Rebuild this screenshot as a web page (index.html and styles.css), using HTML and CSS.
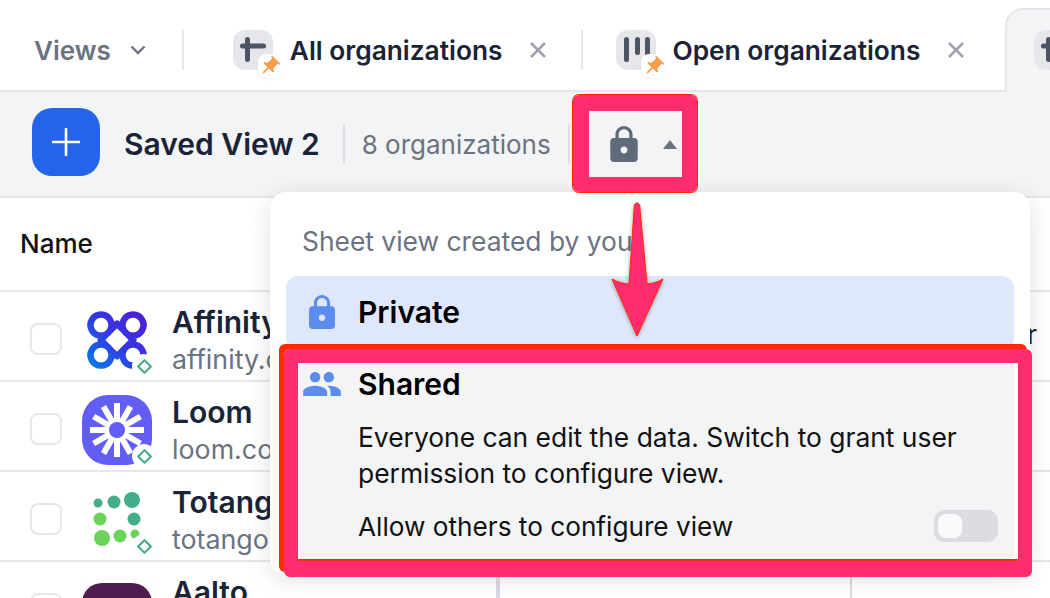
FILE: index.html
```html
<!DOCTYPE html>
<html lang="en">
<head>
    <meta charset="UTF-8">
    <meta name="viewport" content="width=device-width, initial-scale=1.0">
    <title>Saved View 2</title>
    <link rel="stylesheet" href="styles.css">
</head>
<body>
    <svg class="defs" width="0" height="0">
        <symbol id="pin" viewBox="0 0 24 24">
            <path transform="rotate(45 12 12)" d="M16 9V4h1c.55 0 1-.45 1-1s-.45-1-1-1H7c-.55 0-1 .45-1 1s.45 1 1 1h1v5c0 1.66-1.34 3-3 3v2h5.97v7l1 1 1-1v-7H19v-2c-1.66 0-3-1.34-3-3z"/>
        </symbol>
        <symbol id="lock" viewBox="4 1 16 21">
            <path d="M18 8h-1V6c0-2.76-2.24-5-5-5S7 3.24 7 6v2H6c-1.1 0-2 .9-2 2v10c0 1.1.9 2 2 2h12c1.1 0 2-.9 2-2V10c0-1.1-.9-2-2-2zm-6 9c-1.1 0-2-.9-2-2s.9-2 2-2 2 .9 2 2-.9 2-2 2zm3.1-9H8.900V6c0-1.710 1.390-3.100 3.100-3.100 1.710 0 3.100 1.390 3.100 3.100v2z"/>
        </symbol>
    </svg>

    <header class="tabs">
        <span class="views-label">Views</span>
        <svg class="chevron" width="16" height="10" viewBox="0 0 16 10"><path d="M1.500 1.500 8 8l6.500-6.500"/></svg>
        <span class="tabs-divider first"></span>

        <div class="tab tab-first">
            <span class="tab-icon">
                <svg width="40" height="40" viewBox="0 0 40 40"><path d="M14.500 9.500v20M9.500 16h21"/></svg>
                <span class="pin-badge"><svg width="23" height="23"><use href="#pin"/></svg></span>
            </span>
            <span class="tab-name">All organizations</span>
            <svg class="tab-close" width="18" height="18" viewBox="0 0 18 18"><path d="M2 2l14 14M16 2 2 16"/></svg>
        </div>
        <span class="tabs-divider"></span>
        <div class="tab tab-second">
            <span class="tab-icon">
                <svg width="40" height="40" viewBox="0 0 40 40"><path d="M10.500 9.500v20M21.500 9.500v13M31.500 9.500v20"/></svg>
                <span class="pin-badge"><svg width="23" height="23"><use href="#pin"/></svg></span>
            </span>
            <span class="tab-name">Open organizations</span>
            <svg class="tab-close" width="18" height="18" viewBox="0 0 18 18"><path d="M2 2l14 14M16 2 2 16"/></svg>
        </div>
        <div class="tab-active">
            <span class="tab-icon">
                <svg width="40" height="40" viewBox="0 0 40 40"><path d="M14.500 9.500v20M9.500 16h21"/></svg>
            </span>
        </div>
    </header>

    <section class="toolbar">
        <button class="add-button">
            <svg width="28" height="28" viewBox="0 0 28 28"><path d="M14 1v26M1 14h26"/></svg>
        </button>
        <span class="view-title">Saved View 2</span>
        <span class="toolbar-divider"></span>
        <span class="view-count">8 organizations</span>
        <span class="toolbar-divider second"></span>
        <svg class="toolbar-lock" width="28" height="36"><use href="#lock"/></svg>
        <span class="caret"></span>
    </section>

    <main class="sheet">
        <div class="sheet-head">Name</div>

        <div class="row">
            <div class="cell-name">
                <span class="checkbox"></span>
                <span class="logo">
                    <svg width="60" height="60" viewBox="0 0 60 60">
                        <defs>
                            <linearGradient id="affinity" x1="0" y1="1" x2="1" y2="0">
                                <stop offset="0" stop-color="#0a78e6"/>
                                <stop offset="0.5" stop-color="#3537e4"/>
                                <stop offset="1" stop-color="#4d1fd6"/>
                            </linearGradient>
                        </defs>
                        <path fill="none" stroke="url(#affinity)" stroke-width="6.500" stroke-linejoin="round" d="M30 13.800 46.200 30 30 46.200 13.800 30z M14 4.500a10.500 10.500 0 1 0 .01 0z M46 4.500a10.500 10.500 0 1 0 .01 0z M14 34.500a10.500 10.500 0 1 0 .01 0z M46 34.500a10.500 10.500 0 1 0 .01 0z"/>
                    </svg>
                    <span class="status-badge"><i></i></span>
                </span>
                <div class="org">
                    <div class="org-name">Affinity</div>
                    <div class="org-site">affinity.co</div>
                </div>
            </div>
            <div class="cell-mid"></div>
            <div class="cell-last">Partner</div>
        </div>

        <div class="row">
            <div class="cell-name">
                <span class="checkbox"></span>
                <span class="logo">
                    <span class="logo-tile loom">
                        <svg width="70" height="70" viewBox="0 0 70 70">
                            <g stroke="#fff" stroke-width="6">
                                <path d="M35 8v54M8 35h54M21.500 11.600l27 46.800M11.600 21.500l46.800 27M11.600 48.500l46.800-27M21.500 58.400l27-46.800"/>
                            </g>
                            <circle cx="35" cy="35" r="12" fill="#fff"/>
                            <circle cx="35" cy="35" r="8" fill="#625df5"/>
                        </svg>
                    </span>
                    <span class="status-badge"><i></i></span>
                </span>
                <div class="org">
                    <div class="org-name">Loom</div>
                    <div class="org-site">loom.com</div>
                </div>
            </div>
            <div class="cell-mid"></div>
            <div class="cell-last"></div>
        </div>

        <div class="row">
            <div class="cell-name">
                <span class="checkbox"></span>
                <span class="logo">
                    <svg width="70" height="70" viewBox="0 0 70 70">
                        <g fill="#43ad8c">
                            <circle cx="16" cy="18" r="4.500"/>
                            <circle cx="32" cy="17" r="6.500"/>
                            <circle cx="50" cy="15" r="8"/>
                            <circle cx="52" cy="34" r="6.500"/>
                        </g>
                        <g fill="#6cd35a">
                            <circle cx="18" cy="34" r="6.500"/>
                            <circle cx="20" cy="53" r="8"/>
                            <circle cx="38" cy="51" r="6.500"/>
                            <circle cx="53" cy="49" r="4.500"/>
                        </g>
                    </svg>
                    <span class="status-badge"><i></i></span>
                </span>
                <div class="org">
                    <div class="org-name">Totango</div>
                    <div class="org-site">totango.com</div>
                </div>
            </div>
            <div class="cell-mid"></div>
            <div class="cell-last"></div>
        </div>

        <div class="row">
            <div class="cell-name">
                <span class="checkbox"></span>
                <span class="logo">
                    <span class="logo-tile aalto"></span>
                </span>
                <div class="org">
                    <div class="org-name">Aalto</div>
                </div>
            </div>
            <div class="cell-mid">No connection</div>
            <div class="cell-last"></div>
        </div>
    </main>

    <!-- Popover -->
    <div class="popover">
        <div class="popover-title">Sheet view created by you</div>
        <div class="option option-private">
            <svg class="option-lock" width="26" height="34"><use href="#lock"/></svg>
            <span class="option-name">Private</span>
        </div>
        <div class="option-shared">
            <div class="shared-head">
                <svg class="people" width="38" height="24" viewBox="1 5 22 14"><path d="M16 11c1.660 0 2.990-1.340 2.990-3S17.660 5 16 5c-1.660 0-3 1.340-3 3s1.340 3 3 3zm-8 0c1.660 0 2.990-1.340 2.990-3S9.660 5 8 5C6.340 5 5 6.340 5 8s1.340 3 3 3zm0 2c-2.330 0-7 1.170-7 3.500V19h14v-2.500c0-2.330-4.670-3.500-7-3.500zm8 0c-.29 0-.62.02-.97.05 1.160.84 1.970 1.970 1.970 3.450V19h6v-2.500c0-2.330-4.670-3.500-7-3.500z"/></svg>
                <span class="option-name">Shared</span>
            </div>
            <p class="shared-text">Everyone can edit the data. Switch to grant user<br>permission to configure view.</p>
            <div class="shared-toggle">
                <span>Allow others to configure view</span>
                <span class="toggle"><i></i></span>
            </div>
        </div>
    </div>

    <!-- Annotations -->
    <div class="callout callout-lock"></div>
    <div class="callout callout-shared"></div>
    <svg class="arrow" width="70" height="145" viewBox="0 0 70 145">
        <path d="M35 8c1.500 0 2.500 1 2.700 3L45 89c6-.5 11-2 16-5L35 141 10 84c5 3 11 4.500 17 5L32.300 11c.2-2 1.200-3 2.700-3z"/>
    </svg>
</body>
</html>
```

FILE: styles.css
```css
* {
    box-sizing: border-box;
}

html, body {
    height: 100%;
}

body {
    margin: 0;
    position: relative;
    display: flex;
    flex-direction: column;
    overflow: hidden;
    font-family: 'Inter', 'Liberation Sans', sans-serif;
    background-color: white;
    color: #1a2436;
}

.defs {
    position: absolute;
}

/* Tabs */
.tabs {
    flex: none;
    display: flex;
    align-items: center;
    height: 92px;
    padding: 10px 0 0 34px;
    border-bottom: 2px solid #e5e7eb;
    white-space: nowrap;
}

.tabs > *, .tab > *, .toolbar > * {
    flex: none;
}

.views-label {
    font-size: 26px;
    font-weight: 600;
    color: #6b7280;
}

.chevron {
    margin-left: 19px;
    fill: none;
    stroke: #6b7280;
    stroke-width: 2.400;
}

.tabs-divider {
    width: 2px;
    height: 40px;
    margin-left: 34px;
    background-color: #e5e7eb;
}

.tabs-divider.first {
    margin-left: 36px;
}

.tab {
    display: flex;
    align-items: center;
}

.tab-first {
    margin-left: 49px;
}

.tab-second {
    margin-left: 33px;
}

.tab-icon {
    position: relative;
    display: block;
    width: 40px;
    height: 40px;
    border-radius: 12px;
    background-color: #e5e7eb;
}

.tab-icon > svg {
    display: block;
    fill: none;
    stroke: #4b5563;
    stroke-width: 5;
    stroke-linecap: round;
}

.pin-badge {
    position: absolute;
    left: 25px;
    top: 24px;
    display: flex;
    align-items: center;
    justify-content: center;
    width: 24px;
    height: 24px;
    border-radius: 8px;
    background-color: white;
    box-shadow: 0 1px 3px rgba(0, 0, 0, 0.06);
    fill: #f2a04b;
}

.tab-name {
    margin-left: 16px;
    font-size: 26.300px;
    font-weight: 600;
    color: #1a2436;
}

.tab-first .tab-name {
    margin-left: 17px;
}

.tab-close {
    margin-left: 27px;
    fill: none;
    stroke: #9ca3af;
    stroke-width: 2.600;
}

.tab-active {
    flex: 1;
    align-self: stretch;
    margin: -2px 0 -2px 40px;
    padding: 20px 0 0 27px;
    background-color: #f3f4f6;
    border: 2px solid #e5e7eb;
    border-width: 2px 0 0 2px;
    border-top-left-radius: 18px;
}

/* Toolbar */
.toolbar {
    flex: none;
    display: flex;
    align-items: center;
    height: 106px;
    padding: 0 0 4px 32px;
    background-color: #f3f4f6;
    border-bottom: 2px solid #e5e7eb;
    white-space: nowrap;
}

.add-button {
    display: flex;
    align-items: center;
    justify-content: center;
    width: 68px;
    height: 68px;
    padding: 0;
    border: none;
    border-radius: 20px;
    background-color: #2563eb;
}

.add-button svg {
    fill: none;
    stroke: white;
    stroke-width: 2.600;
    stroke-linecap: round;
}

.view-title {
    margin: 4px 0 0 24px;
    font-size: 30px;
    font-weight: 600;
    color: #1a2436;
}

.toolbar-divider {
    width: 2px;
    height: 40px;
    margin: 4px 17px 0 23px;
    background-color: #dcdee3;
}

.toolbar-divider.second {
    margin: 4px 40px 0 17px;
}

.view-count {
    margin-top: 4px;
    font-size: 26px;
    color: #6b7280;
}

.toolbar-lock {
    margin-top: 3px;
    fill: #5f6b7a;
}

.caret {
    width: 0;
    height: 0;
    margin: 5px 0 0 25px;
    border-left: 7px solid transparent;
    border-right: 7px solid transparent;
    border-bottom: 9px solid #6b7280;
}

/* Sheet */
.sheet {
    flex: 1;
    min-height: 0;
    overflow: hidden;
}

.sheet-head {
    display: flex;
    align-items: center;
    height: 94px;
    padding: 0 0 2px 20px;
    border-bottom: 2px solid #e5e7eb;
    font-size: 26px;
    font-weight: 500;
    color: #111;
}

.row {
    display: flex;
    height: 90px;
    border-bottom: 2px solid #e5e7eb;
}

.cell-name {
    display: flex;
    width: 500px;
    padding-left: 30px;
    border-right: 4px solid #d9dbe1;
    overflow: hidden;
}

.cell-mid {
    width: 352px;
    padding: 32px 0 0 27px;
    border-right: 2px solid #d9dbe1;
    font-size: 26px;
    color: #4b5563;
}

.cell-last {
    flex: 1;
    padding: 27px 13px 0 0;
    font-size: 26px;
    color: #1a2436;
    text-align: right;
    white-space: nowrap;
}

.checkbox {
    flex: none;
    width: 32px;
    height: 32px;
    margin-top: 31px;
    border: 2px solid #e5e7eb;
    border-radius: 8px;
    background-color: white;
}

.logo {
    position: relative;
    flex: none;
    display: flex;
    align-items: center;
    justify-content: center;
    width: 70px;
    height: 70px;
    margin: 13px 0 0 20px;
}

.logo-tile {
    display: block;
    width: 70px;
    height: 70px;
    border-radius: 26px;
}

.loom {
    background-color: #625df5;
}

.loom svg {
    display: block;
}

.aalto {
    margin-top: 15px;
    border-radius: 20px 20px 26px 26px;
    background-color: #4e1d4d;
}

.status-badge {
    position: absolute;
    right: -4px;
    bottom: -3px;
    display: flex;
    align-items: center;
    justify-content: center;
    width: 24px;
    height: 24px;
    border-radius: 50%;
    background-color: white;
}

.status-badge i {
    display: block;
    width: 11px;
    height: 11px;
    border: 2.500px solid #3fa98a;
    border-radius: 1px;
    transform: rotate(45deg);
}

.org {
    margin: 13px 0 0 20px;
    white-space: nowrap;
}

.org-name {
    font-size: 30px;
    line-height: 34px;
    font-weight: 600;
    color: #1a2436;
}

.org-site {
    margin-top: 3px;
    font-size: 26.800px;
    line-height: 34px;
    color: #6b7280;
}

/* Popover */
.popover {
    position: absolute;
    left: 270px;
    top: 192px;
    width: 760px;
    height: 383px;
    padding: 0 16px;
    background-color: white;
    border-radius: 16px;
    box-shadow: 0 4px 24px rgba(0, 0, 0, 0.12);
}

.popover-title {
    padding: 35px 0 0 16px;
    font-size: 26.400px;
    line-height: 28px;
    color: #6b7280;
}

.option {
    display: flex;
    align-items: center;
    height: 74px;
    margin-top: 21px;
    padding-left: 23px;
    border-radius: 12px;
}

.option-private {
    background-color: #dfe7fb;
    padding-bottom: 2px;
}

.option-lock {
    fill: #5b8def;
    flex: none;
}

.option-name {
    margin-left: 23px;
    font-size: 30px;
    font-weight: 600;
    color: #000;
}

.option-shared {
    height: 213px;
    padding: 17px 16px 0 72px;
    background-color: #f3f4f6;
    border-radius: 0 0 12px 12px;
    color: #111;
}

.shared-head {
    position: relative;
    display: flex;
    align-items: center;
    height: 34px;
}

.shared-head .option-name {
    margin-left: 0;
}

.people {
    position: absolute;
    left: -55px;
    top: 5px;
    fill: #5b8def;
}

.shared-text {
    margin: 19px 0 0;
    font-size: 26.400px;
    line-height: 35.500px;
}

.shared-toggle {
    display: flex;
    align-items: center;
    justify-content: space-between;
    margin-top: 19px;
    font-size: 26.200px;
}

.toggle {
    display: block;
    width: 64px;
    height: 32px;
    padding: 4px;
    border-radius: 10px;
    background-color: #dcdde0;
}

.toggle i {
    display: block;
    width: 24px;
    height: 24px;
    border-radius: 8px;
    background-color: #f9fafb;
}

/* Annotations */
.callout {
    position: absolute;
    border: 16px solid #ff2d6e;
    border-radius: 6px;
}

.callout-lock {
    left: 573px;
    top: 95px;
    width: 124px;
    height: 97px;
    border-width: 16px 15px 15px 16px;
    box-shadow: 0 0 0 1px #ff2a00;
}

.callout-shared {
    left: 284px;
    top: 349px;
    width: 748px;
    height: 228px;
    border-width: 14px 14px 16px 14px;
    box-shadow: -5px -5px 0 #ff2a00, inset 0 -2px 0 #ff2a00;
}

.arrow {
    position: absolute;
    left: 602px;
    top: 195px;
    fill: #ff2d6e;
    stroke: #ff2a00;
    stroke-width: 1;
    filter: drop-shadow(0 1px 2px rgba(0, 0, 0, 0.35));
}
```
